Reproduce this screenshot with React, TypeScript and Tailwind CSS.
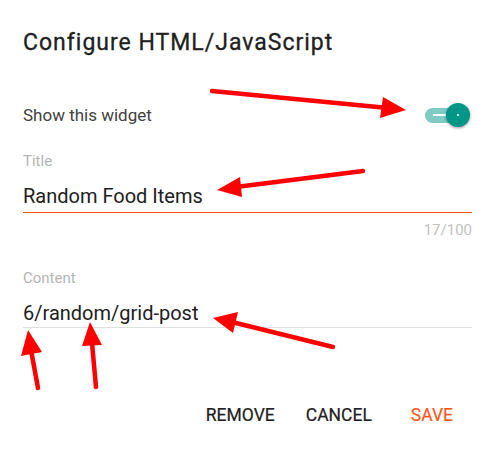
import React from "react";

function Arrows() {
  const red = "#ff0000";
  return (
    <svg
      className="absolute left-0 top-0 pointer-events-none"
      width={498}
      height={450}
      viewBox="0 0 498 450"
    >
      <g stroke={red} strokeWidth={4.5} strokeLinecap="round" fill="none">
        <line x1={212} y1={91} x2={388} y2={108} />
        <line x1={363} y1={171} x2={236} y2={187} />
        <line x1={333} y1={347} x2={232} y2={322} />
        <line x1={38} y1={388} x2={31} y2={350} />
        <line x1={96} y1={387} x2={92} y2={343} />
      </g>
      <g fill={red}>
        <polygon points="406,110 383,97 380,118" />
        <polygon points="217,190 240,177 242,197" />
        <polygon points="213,318 238,312 233,333" />
        <polygon points="28,330 21,356 42,352" />
        <polygon points="90,322 82,346 102,345" />
      </g>
    </svg>
  );
}

export default function App() {
  return (
    <div
      className="relative w-[498px] h-[450px] bg-white overflow-hidden"
      style={{ fontFamily: "Roboto, 'Noto Sans', sans-serif" }}
    >
      <div className="flex flex-col pl-[23px] pr-[26px] pt-[29px]">
        <div className="text-[23px] leading-[28px] tracking-[1px] text-[#212121] [-webkit-text-stroke:0.3px_#212121]">
          Configure HTML/JavaScript
        </div>

        <div className="mt-[45px] h-[26px] flex items-center justify-between">
          <span className="text-[17px] leading-[24px] text-[#424242]">
            Show this widget
          </span>
          <div className="relative w-[36px] h-[24px] mr-[11px] flex items-center">
            <div className="w-[36px] h-[15px] rounded-full bg-[#80cbc4] flex items-center pl-[8px]">
              <div className="w-[13px] h-[2px] bg-white" />
            </div>
            <div className="absolute right-[-9px] top-0 w-[24px] h-[24px] rounded-full bg-[#009688] shadow-[0_1px_3px_rgba(0,0,0,0.4)] flex items-center justify-center">
              <div className="w-[2px] h-[2px] rounded-full bg-white" />
            </div>
          </div>
        </div>

        <div className="mt-[23px] text-[15px] leading-[20px] text-[#b5b5b5]">
          Title
        </div>
        <div className="mt-[11px] pb-[2px] border-b border-[#f4511e] text-[20px] leading-[28px] text-[#212121]">
          Random Food Items
        </div>
        <div className="mt-[7px] text-right text-[15px] leading-[20px] text-[#c2c2c2]">
          17/100
        </div>

        <div className="mt-[28px] text-[15px] leading-[20px] text-[#b5b5b5]">
          Content
        </div>
        <div className="mt-[11px] border-b border-[#e0e0e0] text-[20px] leading-[28px] text-[#212121]">
          6/random/grid-post
        </div>

        <div className="mt-[77px] flex justify-end pr-[19px] text-[17.5px] leading-[20px] uppercase [-webkit-text-stroke:0.2px_currentColor]">
          <span className="text-[#212121]">Remove</span>
          <span className="ml-[31px] text-[#212121]">Cancel</span>
          <span className="ml-[39px] text-[#ff5722]">Save</span>
        </div>
      </div>
      <Arrows />
    </div>
  );
}
